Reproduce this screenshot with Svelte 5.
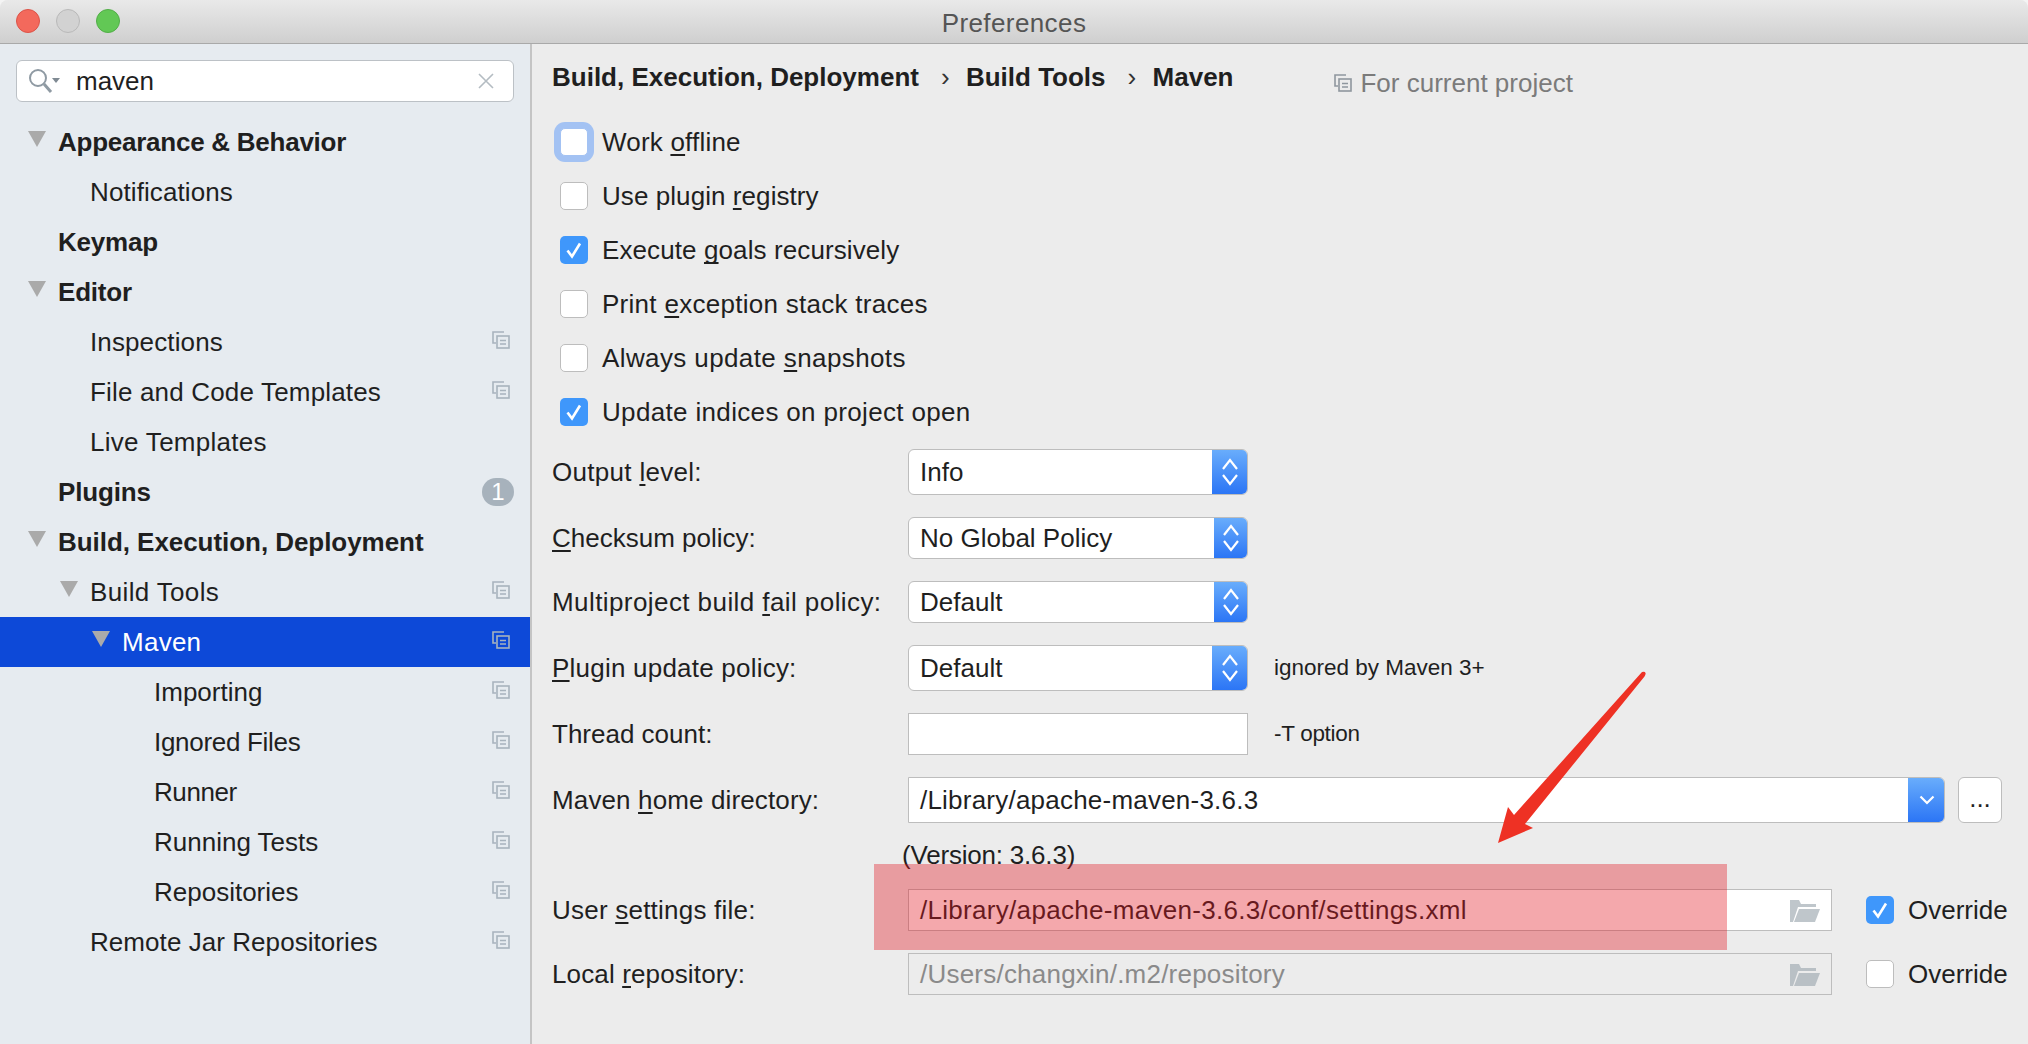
<script>
  const tree = [
    { t: 'Appearance & Behavior', b: 1, l: 0, arrow: 1, ls: -0.25 },
    { t: 'Notifications', l: 1, ls: 0.1 },
    { t: 'Keymap', b: 1, l: 0, ls: -0.2 },
    { t: 'Editor', b: 1, l: 0, arrow: 1, ls: -0.2 },
    { t: 'Inspections', l: 1, copy: 1, ls: 0.12 },
    { t: 'File and Code Templates', l: 1, copy: 1, ls: 0.17 },
    { t: 'Live Templates', l: 1, ls: 0.28 },
    { t: 'Plugins', b: 1, l: 0, badge: 1, ls: -0.15 },
    { t: 'Build, Execution, Deployment', b: 1, l: 0, arrow: 1, ls: -0.05 },
    { t: 'Build Tools', l: 1, arrow: 1, copy: 1, ls: 0.35 },
    { t: 'Maven', l: 2, arrow: 1, copy: 1, sel: 1, ls: 0.26 },
    { t: 'Importing', l: 3, copy: 1, ls: 0 },
    { t: 'Ignored Files', l: 3, copy: 1, ls: -0.3 },
    { t: 'Runner', l: 3, copy: 1, ls: -0.43 },
    { t: 'Running Tests', l: 3, copy: 1, ls: 0 },
    { t: 'Repositories', l: 3, copy: 1, ls: 0 },
    { t: 'Remote Jar Repositories', l: 1, copy: 1, ls: 0.06 }
  ];
  const checks = [
    { a: 'Work ', u: 'o', z: 'ffline', focus: 1, ls: 0.2 },
    { a: 'Use plugin ', u: 'r', z: 'egistry', ls: 0.07 },
    { a: 'Execute ', u: 'g', z: 'oals recursively', on: 1, ls: 0.1 },
    { a: 'Print ', u: 'e', z: 'xception stack traces', ls: 0.28 },
    { a: 'Always update ', u: 's', z: 'napshots', ls: 0.39 },
    { a: 'Update indices on project open', u: '', z: '', on: 1, ls: 0.34 }
  ];
</script>

{#snippet copyIcon()}
  <svg class="copy" viewBox="0 0 18 18" width="18" height="18" fill="none" stroke="#a8b3bd" stroke-width="1.6">
    <path d="M12 1H1v11h3" />
    <rect x="5" y="5" width="12" height="12" />
    <path d="M8 9.5h6M8 13h6" />
  </svg>
{/snippet}

{#snippet tick()}
  <svg viewBox="0 0 28 28" width="28" height="28" fill="none" stroke="#fff" stroke-width="2.6">
    <path d="M7.5 14.5l4.5 6 8-13" />
  </svg>
{/snippet}

{#snippet stepper(w)}
  <span class="stepper" style="width:{w}px">
    <svg viewBox="0 0 16 28" width="16" height="28" fill="none" stroke="#fff" stroke-width="2.2">
      <path d="M1 11l7-9 7 9M1 17l7 9 7-9" />
    </svg>
  </span>
{/snippet}

{#snippet folder(c)}
  <svg class="folder" viewBox="0 0 30 22" width="30" height="22">
    <path d="M0 0h9l2 4h15v3H8L3 22H0z" fill={c} />
    <path d="M9 9h21l-5 13H4z" fill={c} />
  </svg>
{/snippet}

<div class="window">
  <header class="titlebar">
    <span class="light red"></span>
    <span class="light gray"></span>
    <span class="light green"></span>
    <span class="title">Preferences</span>
  </header>

  <div class="body">
    <aside class="sidebar">
      <div class="search">
        <svg class="lens" viewBox="0 0 34 26" width="34" height="26" fill="none" stroke="#8f9aa3">
          <circle cx="10" cy="10" r="8" stroke-width="2" />
          <path d="M16 16l7 8" stroke-width="3" />
          <path d="M24 10h8l-4 5z" fill="#7f8a93" stroke="none" />
        </svg>
        <span class="query">maven</span>
        <svg class="clear" viewBox="0 0 16 16" width="16" height="16" stroke="#b4bcc2" stroke-width="1.6">
          <path d="M1 1l14 14M15 1L1 15" />
        </svg>
      </div>

      <ul class="tree">
        {#each tree as n}
          <li class="node level{n.l}" class:sel={n.sel}>
            {#if n.arrow}<span class="tri"></span>{/if}
            <span class="name" class:bold={n.b} style="letter-spacing:{n.ls}px">{n.t}</span>
            {#if n.copy}{@render copyIcon()}{/if}
            {#if n.badge}<span class="badge">1</span>{/if}
          </li>
        {/each}
      </ul>
    </aside>

    <main class="panel">
      <div class="crumbs">
        <b>Build, Execution, Deployment</b>
        <span class="sep one">›</span>
        <b>Build Tools</b>
        <span class="sep two">›</span>
        <b>Maven</b>
        <span class="scope">
          <svg viewBox="0 0 18 18" width="18" height="18" fill="none" stroke="#8f979e" stroke-width="1.6">
            <path d="M12 1H1v11h3" />
            <rect x="5" y="5" width="12" height="12" />
            <path d="M8 9.5h6M8 13h6" />
          </svg>
          For current project
        </span>
      </div>

      <div class="checks">
        {#each checks as c}
          <div class="check-row">
            <span class="box" class:on={c.on} class:focus={c.focus}>
              {#if c.on}{@render tick()}{/if}
            </span>
            <span style="letter-spacing:{c.ls}px">{c.a}{#if c.u}<u>{c.u}</u>{/if}{c.z}</span>
          </div>
        {/each}
      </div>

      <div class="form">
        <div class="row">
          <span class="label ls-3">Output <u>l</u>evel:</span>
          <div class="select tall"><span>Info</span>{@render stepper(36)}</div>
        </div>
        <div class="row">
          <span class="label"><u>C</u>hecksum policy:</span>
          <div class="select"><span>No Global Policy</span>{@render stepper(34)}</div>
        </div>
        <div class="row">
          <span class="label ls-4">Multiproject build <u>f</u>ail policy:</span>
          <div class="select"><span>Default</span>{@render stepper(34)}</div>
        </div>
        <div class="row">
          <span class="label ls-2">
            <u>P</u>lugin update policy:</span>
          <div class="select tall"><span>Default</span>{@render stepper(36)}</div>
          <span class="hint">ignored by Maven 3+</span>
        </div>
        <div class="row">
          <span class="label">Thread count:</span>
          <div class="input thread"></div>
          <span class="hint narrow">-T option</span>
        </div>
        <div class="row">
          <span class="label ls-1">Maven <u>h</u>ome directory:</span>
          <div class="combo">
            <span class="ls-2">/Library/apache-maven-3.6.3</span>
            <span class="stepper drop">
              <svg viewBox="0 0 16 10" width="16" height="10" fill="none" stroke="#fff" stroke-width="2.2"><path d="M1.500 1.500L8 8l6.500-6.500" /></svg>
            </span>
          </div>
          <div class="more">...</div>
        </div>
        <div class="version">(Version: 3.6.3)</div>
        <div class="row">
          <span class="label ls-2">User <u>s</u>ettings file:</span>
          <div class="input path"><span class="ls-3">/Library/apache-maven-3.6.3/conf/settings.xml</span>{@render folder('#bfc6cb')}</div>
          <span class="box small on">{@render tick()}</span>
          <span>Override</span>
        </div>
        <div class="row">
          <span class="label ls-1">Local <u>r</u>epository:</span>
          <div class="input path off"><span class="ls-2">/Users/changxin/.m2/repository</span>{@render folder('#b9c0c5')}</div>
          <span class="box small"></span>
          <span>Override</span>
        </div>
      </div>
    </main>
  </div>

  <div class="highlight"></div>
  <svg class="arrow" viewBox="0 0 2028 1044" width="2028" height="1044">
    <path d="M1642 672q3-1 3.500 1q.5 1-1 3.500L1525 824l8 4-35 15 10-36 6 8z" fill="#ee3124" />
  </svg>
</div>

<style>
  :global(body) {
    margin: 0;
    background: #f4f4f4;
  }
  .window {
    position: relative;
    width: 2028px;
    height: 1044px;
    overflow: hidden;
    border-radius: 8px 8px 0 0;
    font-family: "Liberation Sans", Arial, sans-serif;
    font-size: 26px;
    color: #1f1f1f;
    background: #ececec;
  }
  .ls-1 { letter-spacing: 0.13px; }
  .ls-2 { letter-spacing: 0.22px; }
  .ls-3 { letter-spacing: 0.3px; }
  .ls-4 { letter-spacing: 0.42px; }
  .titlebar {
    box-sizing: border-box;
    position: relative;
    height: 44px;
    display: flex;
    align-items: center;
    gap: 16px;
    padding: 0 0 1px 16px;
    background: linear-gradient(#e9e9e9, #cfcfcf);
    border-bottom: 1px solid #a9a9a9;
  }
  .light {
    box-sizing: border-box;
    width: 24px;
    height: 24px;
    border-radius: 50%;
    border: 1px solid transparent;
  }
  .red { background: #f3695c; border-color: #dc5348; }
  .gray { background: #d2d2d2; border-color: #b9b9b9; }
  .green { background: #62c855; border-color: #52ae48; }
  .title {
    position: absolute;
    left: 0;
    right: 0;
    top: 8px;
    text-align: center;
    color: #555;
    letter-spacing: 0.4px;
  }
  .body {
    display: flex;
    height: 1000px;
  }
  .sidebar {
    box-sizing: border-box;
    width: 532px;
    flex: none;
    padding-top: 16px;
    background: #e6ebf0;
    border-right: 2px solid #c4c4c4;
  }
  .search {
    box-sizing: border-box;
    position: relative;
    height: 42px;
    margin: 0 16px;
    display: flex;
    align-items: center;
    padding-left: 59px;
    background: #fff;
    border: 1px solid #bcc1c6;
    border-radius: 6px;
  }
  .lens {
    position: absolute;
    left: 11px;
    top: 7px;
  }
  .clear {
    position: absolute;
    right: 19px;
    top: 12px;
  }
  .tree {
    list-style: none;
    margin: 15px 0 0;
    padding: 0;
  }
  .node {
    position: relative;
    height: 50px;
    display: flex;
    align-items: center;
  }
  .level0 { padding-left: 58px; }
  .level1 { padding-left: 90px; }
  .level2 { padding-left: 122px; }
  .level3 { padding-left: 154px; }
  .sel {
    background: #0d49d8;
    color: #fff;
  }
  .name { white-space: nowrap; }
  .bold { font-weight: 700; }
  .tri {
    position: absolute;
    top: 14px;
    width: 0;
    height: 0;
    border-left: 9px solid transparent;
    border-right: 9px solid transparent;
    border-top: 16px solid #aaaaaa;
  }
  .level0 .tri { left: 28px; }
  .level1 .tri { left: 60px; }
  .level2 .tri { left: 92px; }
  .copy {
    position: absolute;
    right: 20px;
    top: 14px;
  }
  .badge {
    position: absolute;
    right: 16px;
    top: 11px;
    width: 32px;
    height: 28px;
    border-radius: 14px;
    background: #a7b2bc;
    color: #fff;
    font-size: 24px;
    line-height: 28px;
    text-align: center;
  }
  .panel {
    flex: 1;
    padding: 13px 0 0 20px;
  }
  .crumbs {
    display: flex;
    align-items: center;
    height: 40px;
    white-space: nowrap;
  }
  .sep {
    width: 22px;
    color: #333;
  }
  .sep.one { margin-left: 22px; margin-right: 3px; }
  .sep.two { margin-left: 22px; margin-right: 3px; }
  .scope {
    display: flex;
    align-items: center;
    gap: 8px;
    margin-left: 101px;
    padding-top: 12px;
    color: #7b7b7b;
  }
  .checks {
    margin-top: 18px;
    padding-left: 8px;
  }
  .check-row {
    height: 54px;
    display: flex;
    align-items: center;
    gap: 14px;
  }
  .box {
    box-sizing: border-box;
    flex: none;
    width: 28px;
    height: 28px;
    background: #fff;
    border: 1px solid #bdbdbd;
    border-radius: 5px;
  }
  .box.on {
    background: #3f97fb;
    border: none;
  }
  .box.focus {
    box-shadow: 0 0 0 2px #fff inset, 0 0 0 6px #a3c2f3;
    border-color: #a3c2f3;
  }
  .form {
    margin-top: 10px;
    display: flex;
    flex-direction: column;
  }
  .row {
    display: flex;
    align-items: center;
    margin-bottom: 22px;
  }
  .label {
    width: 356px;
    flex: none;
    white-space: nowrap;
  }
  .select {
    box-sizing: border-box;
    width: 340px;
    height: 42px;
    display: flex;
    justify-content: space-between;
    align-items: stretch;
    padding-left: 11px;
    background: #fff;
    border: 1px solid #bdbdbd;
    border-radius: 6px;
    line-height: 40px;
    overflow: hidden;
  }
  .select.tall { height: 46px; line-height: 44px; }
  .stepper {
    margin: -1px;
    display: flex;
    align-items: center;
    justify-content: center;
    background: linear-gradient(#6aaefc, #2a74f5);
  }
  .input {
    box-sizing: border-box;
    height: 42px;
    background: #fff;
    border: 1px solid #bdbdbd;
  }
  .thread { width: 340px; }
  .hint {
    margin-left: 26px;
    font-size: 22.5px;
  }
  .hint.narrow { letter-spacing: -0.3px; }
  .combo {
    box-sizing: border-box;
    width: 1037px;
    height: 46px;
    display: flex;
    justify-content: space-between;
    padding-left: 11px;
    line-height: 44px;
    background: #fff;
    border: 1px solid #bdbdbd;
    border-radius: 0 6px 6px 0;
    overflow: hidden;
  }
  .drop { width: 37px; }
  .more {
    box-sizing: border-box;
    width: 44px;
    height: 46px;
    margin-left: 13px;
    background: #fff;
    border: 1px solid #bdbdbd;
    border-radius: 6px;
    text-align: center;
    line-height: 40px;
  }
  .version {
    height: 44px;
    margin-top: -22px;
    padding: 21px 0 1px 350px;
    box-sizing: content-box;
    line-height: 22px;
    letter-spacing: -0.2px;
  }
  .path {
    width: 924px;
    display: flex;
    justify-content: space-between;
    align-items: center;
    padding: 0 11px;
    margin-right: 34px;
    line-height: 40px;
  }
  .path.off {
    background: #ececec;
    color: #8a8a8a;
  }
  .box.small { margin-right: 14px; }
  .folder { margin-top: 1px; }
  u {
    text-underline-offset: 3px;
    text-decoration-thickness: 2px;
    text-decoration-skip-ink: none;
  }
  .highlight {
    position: absolute;
    left: 874px;
    top: 864px;
    width: 853px;
    height: 86px;
    background: rgba(225, 20, 31, 0.37);
  }
  .arrow {
    position: absolute;
    left: 0;
    top: 0;
  }
</style>
